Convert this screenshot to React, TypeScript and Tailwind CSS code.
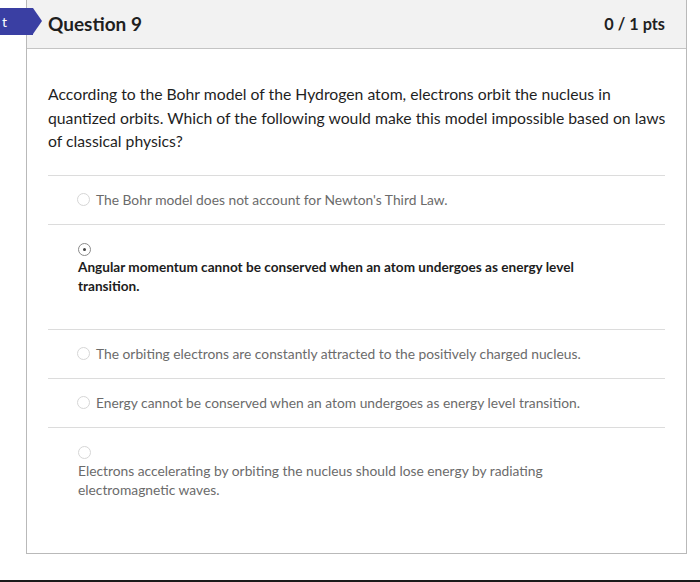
import React from 'react';

interface OptionProps {
  lines: string[];
  selected?: boolean;
  stacked?: boolean;
}

const Radio: React.FC<{ selected?: boolean }> = ({ selected }) => (
  <span
    className={`flex h-[13px] w-[13px] shrink-0 items-center justify-center rounded-full border ${
      selected ? 'border-[#8a8a8a]' : 'border-[#d6d6d6]'
    } bg-white`}
  >
    {selected && <span className="h-[3px] w-[3px] rounded-full bg-[#444]" />}
  </span>
);

const Option: React.FC<OptionProps> = ({ lines, selected, stacked }) => {
  if (stacked) {
    return (
      <li className="border-t border-[#dcdcdc] pt-[18px] pb-[33px] pl-[30px] pr-4">
        <Radio selected={selected} />
        <p
          className={`mt-[2px] whitespace-nowrap leading-[19px] ${
            selected ? 'text-[13.6px] font-bold text-[#1d1d1d]' : 'text-[13.8px] text-[#6b6b6b]'
          }`}
        >
          {lines.map((l, i) => (
            <React.Fragment key={i}>
              {i > 0 && <br />}
              {l}
            </React.Fragment>
          ))}
        </p>
      </li>
    );
  }
  return (
    <li className="flex items-center gap-[6px] border-t border-[#dcdcdc] py-[14px] pl-[29px]">
      <Radio selected={selected} />
      <span className="whitespace-nowrap text-[13.8px] leading-[20px] text-[#6b6b6b]">{lines[0]}</span>
    </li>
  );
};

export default function App() {
  return (
    <div
      className="relative h-[582px] w-[700px] overflow-hidden bg-white"
      style={{ fontFamily: 'Lato, "Open Sans", sans-serif' }}
    >
      <div className="ml-[26px] h-[554px] w-[661px] border border-t-0 border-[#b9b9b9]">
        <div className="flex h-[49px] items-center justify-between border-b border-[#c4c4c4] bg-[#f2f2f2] pl-[21px] pr-[21px]">
          <h2 className="text-[19px] font-bold text-[#1f1f1f]">Question 9</h2>
          <span className="text-[16.3px] font-bold text-[#1f1f1f]">0 / 1 pts</span>
        </div>
        <div className="px-[21px] pt-[33px]">
          <p className="whitespace-nowrap text-[15.75px] leading-[23.5px] text-[#1f1f1f]">
            According to the Bohr model of the Hydrogen atom, electrons orbit the nucleus in
            <br />
            quantized orbits. Which of the following would make this model impossible based on laws
            <br />
            of classical physics?
          </p>
          <ul className="mt-[22px]">
            <Option lines={["The Bohr model does not account for Newton's Third Law."]} />
            <Option
              stacked
              selected
              lines={[
                'Angular momentum cannot be conserved when an atom undergoes as energy level',
                'transition.',
              ]}
            />
            <Option lines={['The orbiting electrons are constantly attracted to the positively charged nucleus.']} />
            <Option lines={['Energy cannot be conserved when an atom undergoes as energy level transition.']} />
            <Option
              stacked
              lines={[
                'Electrons accelerating by orbiting the nucleus should lose energy by radiating',
                'electromagnetic waves.',
              ]}
            />
          </ul>
        </div>
      </div>

      {/* left tab marker */}
      <div className="absolute left-0 top-[8px] flex h-[27px]">
        <div className="flex w-[33px] items-center bg-[#3a3fa3] pl-[2px] text-[14px] text-white">t</div>
        <div className="h-0 w-0 border-y-[13.5px] border-l-[9px] border-y-transparent border-l-[#3a3fa3]" />
      </div>

      <div className="absolute bottom-0 left-0 h-[2px] w-full bg-[#1a1a1a]" />
    </div>
  );
}
